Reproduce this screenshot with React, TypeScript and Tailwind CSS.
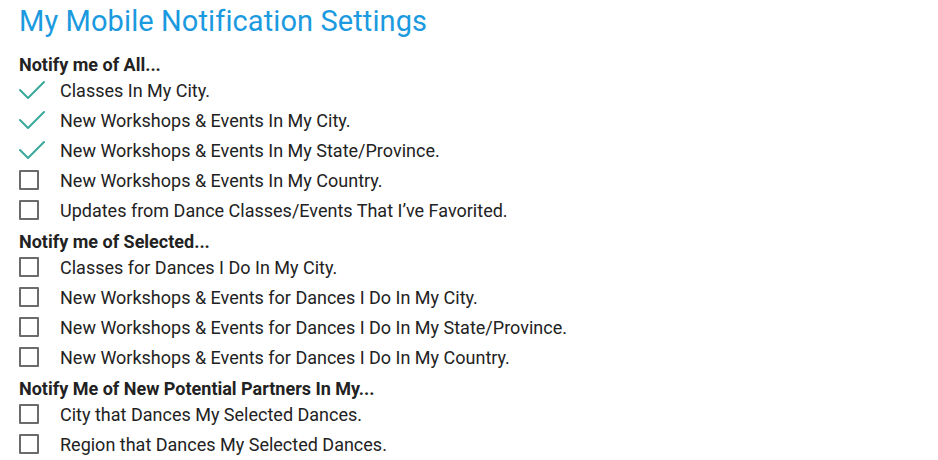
import React from "react";

type Item = { label: string; checked?: boolean };

const sections: { title: string; items: Item[] }[] = [
  {
    title: "Notify me of All...",
    items: [
      { label: "Classes In My City.", checked: true },
      { label: "New Workshops & Events In My City.", checked: true },
      { label: "New Workshops & Events In My State/Province.", checked: true },
      { label: "New Workshops & Events In My Country." },
      { label: "Updates from Dance Classes/Events That I\u2019ve Favorited." },
    ],
  },
  {
    title: "Notify me of Selected...",
    items: [
      { label: "Classes for Dances I Do In My City." },
      { label: "New Workshops & Events for Dances I Do In My City." },
      { label: "New Workshops & Events for Dances I Do In My State/Province." },
      { label: "New Workshops & Events for Dances I Do In My Country." },
    ],
  },
  {
    title: "Notify Me of New Potential Partners In My...",
    items: [
      { label: "City that Dances My Selected Dances." },
      { label: "Region that Dances My Selected Dances." },
    ],
  },
];

function Check() {
  return (
    <svg width="26" height="20" viewBox="0 0 26 20" className="block">
      <path d="M1 10 L9 18 L25 2" fill="none" stroke="#3aa99b" strokeWidth="2" strokeLinecap="round" strokeLinejoin="round" />
    </svg>
  );
}

function Box() {
  return <div className="w-[20px] h-[20px] border-2 border-[#6b6b6b] rounded-[1px] bg-white" />;
}

export default function App() {
  return (
    <div className="w-[938px] h-[460px] bg-white px-[19px] pt-[1px] font-['Roboto',sans-serif] text-[#1f1f1f] overflow-hidden">
      <h1 className="text-[29px] leading-[40px] text-[#1b9ae0] tracking-[0.1px]">My Mobile Notification Settings</h1>
      <div className="mt-[7px] flex flex-col">
        {sections.map((s, si) => (
          <div key={si}>
            <div className="text-[18px] leading-[20px] pt-[7px] font-bold text-[#222]">{s.title}</div>
            {s.items.map((it, i) => (
              <div key={i} className="flex items-center h-[30px]">
                <div className="w-[41px] flex items-center">
                  {it.checked ? <Check /> : <Box />}
                </div>
                <span className="text-[18px] text-[#222]">{it.label}</span>
              </div>
            ))}
          </div>
        ))}
      </div>
    </div>
  );
}
